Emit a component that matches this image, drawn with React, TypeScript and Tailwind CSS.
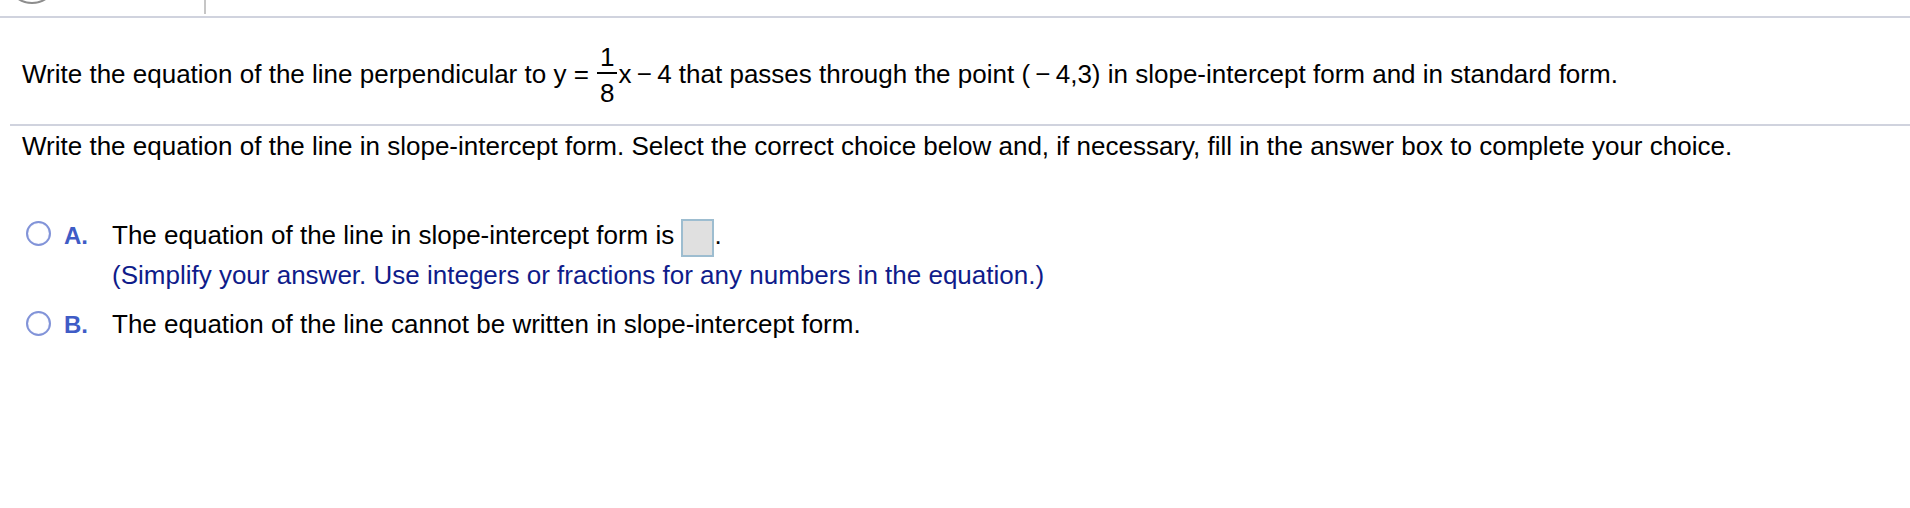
import React from 'react';

const font = "font-['Liberation_Sans','Arial',sans-serif]";

function Radio() {
  return (
    <span className="self-start mt-[2px] w-[25px] h-[25px] rounded-full border-2 border-[#8193d8] bg-white shadow-[inset_0_0_1px_#b7c3ee] shrink-0" />
  );
}

function Fraction({ top, bottom }: { top: string; bottom: string }) {
  return (
    <span className="inline-flex flex-col items-center align-middle mx-[1px]">
      <span className="leading-[26px] pb-[2px] px-[3px]">{top}</span>
      <span className="h-[2px] w-[20px] bg-black" />
      <span className="leading-[30px] pt-[4px] px-[3px]">{bottom}</span>
    </span>
  );
}

export default function App() {
  return (
    <div className={`${font} w-[1910px] h-[508px] bg-white text-black text-[26px] overflow-hidden`}>
      {/* toolbar remnant */}
      <div className="flex h-[14px]">
        <div className="w-[206px] border-r-2 border-[#c6c6c6] overflow-hidden">
          <div className="w-[52px] h-[52px] -mt-[48px] ml-[6px] rounded-full border-2 border-[#8d8d8d]" />
        </div>
      </div>
      <div className="mt-[2px] border-t-2 border-[#d0d3de]" />

      {/* question */}
      <div className="mt-[26px] pl-[22px] leading-[30px] whitespace-nowrap">
        Write the equation of the line perpendicular to y ={' '}
        <Fraction top="1" bottom="8" />
        x{'\u2009'}−{'\u2009'}4 that passes through the point ({'\u2009'}−{'\u2009'}4,3) in slope-intercept form and in standard form.
      </div>

      <div className="mt-[16px] ml-[10px] border-t-2 border-[#d0d3de]" />

      <div className="mt-[5px] pl-[22px] leading-[30px] whitespace-nowrap">
        Write the equation of the line in slope-intercept form. Select the correct choice below and, if necessary, fill in the answer box to complete your choice.
      </div>

      {/* choices */}
      <div className="mt-[58px] flex flex-col">
        <div className="flex items-baseline pl-[26px]">
          <Radio />
          <span className="ml-[13px] w-[48px] text-[24px] font-bold text-[#3f5cc6] leading-[30px]">A.</span>
          <div className="leading-[30px] whitespace-nowrap">
            <div>
              The equation of the line in slope-intercept form is{' '}
              <span className="inline-block w-[33px] h-[38px] align-[-13px] bg-[#e0e0e0] border-2 border-[#9dbdd0]" />.
            </div>
            <div className="mt-[3px] text-[#0f1c8a]">
              (Simplify your answer. Use integers or fractions for any numbers in the equation.)
            </div>
          </div>
        </div>

        <div className="mt-[19px] flex items-baseline pl-[26px]">
          <Radio />
          <span className="ml-[13px] w-[48px] text-[24px] font-bold text-[#3f5cc6] leading-[30px]">B.</span>
          <div className="leading-[30px] whitespace-nowrap">
            The equation of the line cannot be written in slope-intercept form.
          </div>
        </div>
      </div>
    </div>
  );
}
